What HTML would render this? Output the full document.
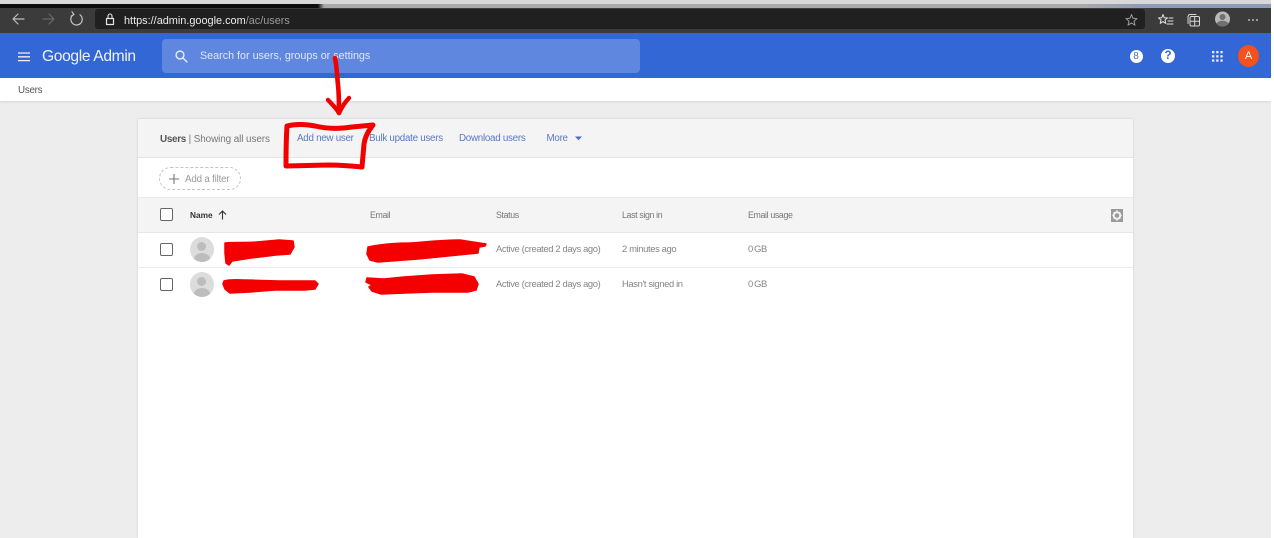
<!DOCTYPE html>
<html><head><meta charset="utf-8">
<style>
html,body{margin:0;padding:0;width:1274px;height:538px;overflow:hidden;background:#fff}
#p{position:absolute;left:0;top:0;width:1271px;height:538px;background:#ededed;overflow:hidden;font-family:"Liberation Sans",sans-serif;filter:blur(.35px)}
.a{position:absolute}
.t{position:absolute;white-space:nowrap;line-height:14px}
.cb{position:absolute;left:160px;width:10.500px;height:11px;border:1.500px solid #666;border-radius:2px;background:#fff}
.av{position:absolute;left:190px;width:24px;height:25px;border-radius:50%;background:#dcdcdc;overflow:hidden}
.av i{position:absolute;left:7px;top:5px;width:9px;height:9px;border-radius:50%;background:#bdbdbd}
.av b{position:absolute;left:4px;top:16px;width:16px;height:12px;border-radius:50%;background:#bdbdbd}
.h{font-size:8.800px;color:#777;letter-spacing:-.35px}
.c{font-size:9.400px;color:#858585;letter-spacing:-.36px}
.l{font-size:9.800px;color:#5a78c0;letter-spacing:-.27px}
</style></head><body>
<div id="p">
<div class="a" style="left:0;top:0;width:1271px;height:4px;background:#d8d8d8"></div>
<div class="a" style="left:0;top:4px;width:1271px;height:4px;background:linear-gradient(90deg,#0d0d0d 0,#0d0d0d 25%,#a9a9a9 25.5%,#a9a9a9 85%,#8d9ab8 90%,#8d9ab8 100%)"></div>
<div class="a" style="left:0;top:8px;width:1271px;height:25px;background:#3b3b3b"></div>
<div class="a" style="left:95px;top:9px;width:1050px;height:20px;background:#202020;border-radius:3px"></div>
<svg class="a" style="left:0;top:8px" width="120" height="25" fill="none" stroke-linecap="round" stroke-linejoin="round">
<path d="M24 11H13M18 6l-5 5 5 5" stroke="#bdbdbd" stroke-width="1.200"/>
<path d="M43 11h10M49 6l5 5-5 5" stroke="#686868" stroke-width="1.200"/>
<path d="M73.500 6.500A5.700 5.700 0 1 0 80 6.800M72 3.800l2 2.700-2.800 1.700" stroke="#c4c4c4" stroke-width="1.200"/>
<rect x="106.500" y="10.500" width="7" height="6" stroke="#e5e5e5" stroke-width="1.200"/>
<path d="M108 10.500V8a2 2 0 0 1 4 0v2.500" stroke="#e5e5e5" stroke-width="1.100"/>
</svg>
<div class="t" style="left:124px;top:13.500px;font-size:10.900px;color:#ececec">https://admin.google.com<span style="color:#9a9a9a">/ac/users</span></div>
<svg class="a" style="left:1120px;top:8px" width="151" height="25" fill="none" stroke-linejoin="round" stroke-linecap="round">
<path d="M11.500 6.500l1.500 3.800 4 .3-3 2.600 1 4-3.500-2.200-3.500 2.200 1-4-3-2.600 4-.3z" stroke="#9a9a9a"/>
<path d="M43 6.500l1.200 3.200 3.300.2-2.500 2.100.8 3.400-2.800-1.900-2.800 1.900.8-3.400-2.500-2.100 3.300-.2z" stroke="#e2e2e2"/>
<path d="M49 10h4M48 13h5M47 16h6" stroke="#e2e2e2"/>
<rect x="70" y="8.500" width="9.500" height="9.500" rx="1.500" stroke="#d8d8d8"/>
<path d="M68 15.500V8.500l1-2h7M74.700 9v9M70 13.200h9.500" stroke="#d8d8d8"/>
<circle cx="102.500" cy="11" r="7.500" fill="#b8b8b8"/>
<circle cx="102.500" cy="9" r="3" fill="#707070"/>
<path d="M96.500 15.500a6.500 4.500 0 0 1 12 0a7.500 7.500 0 0 1-12 0z" fill="#707070"/>
<circle cx="129" cy="12" r=".9" fill="#ddd"/><circle cx="133" cy="12" r=".9" fill="#ddd"/><circle cx="137" cy="12" r=".9" fill="#ddd"/>
</svg>

<div class="a" style="left:0;top:33px;width:1271px;height:45px;background:#3367d6"></div>
<div class="a" style="left:0;top:78px;width:1271px;height:23px;background:#fff;box-shadow:0 1px 2px rgba(0,0,0,.1)"></div>
<svg class="a" style="left:18px;top:52px" width="13" height="10"><path d="M0 1h12M0 4.800h12M0 8.600h12" stroke="#f0f0f0" stroke-width="1.300"/></svg>
<div class="t" style="left:42px;top:48px;font-size:15.600px;color:#eef2fb;line-height:18px;letter-spacing:-.35px">Google Admin</div>
<div class="a" style="left:162px;top:39px;width:478px;height:34px;background:#5f87e0;border-radius:4px"></div>
<svg class="a" style="left:175px;top:50px" width="13" height="13" fill="none" stroke="#e9eefa" stroke-width="1.400"><circle cx="5" cy="5" r="3.900"/><path d="M8 8l4.200 4.200"/></svg>
<div class="t" style="left:200px;top:49px;font-size:10.750px;color:#dfe7f8">Search for users, groups or settings</div>

<div class="a" style="left:1129.500px;top:49.500px;width:13px;height:13px;border-radius:50%;background:#fff;color:#3f6fd6;font-size:10px;line-height:13px;text-align:center">8</div>
<div class="a" style="left:1161px;top:49px;width:14px;height:14px;border-radius:50%;background:#fff;color:#3367d6;font-size:11.500px;font-weight:bold;line-height:14px;text-align:center">?</div>
<svg class="a" style="left:1212px;top:51px" width="11" height="11" fill="#e6ecfa">
<rect x="0" y="0" width="2.300" height="2.300"/><rect x="4.200" y="0" width="2.300" height="2.300"/><rect x="8.400" y="0" width="2.300" height="2.300"/>
<rect x="0" y="4.200" width="2.300" height="2.300"/><rect x="4.200" y="4.200" width="2.300" height="2.300"/><rect x="8.400" y="4.200" width="2.300" height="2.300"/>
<rect x="0" y="8.400" width="2.300" height="2.300"/><rect x="4.200" y="8.400" width="2.300" height="2.300"/><rect x="8.400" y="8.400" width="2.300" height="2.300"/></svg>
<div class="a" style="left:1238px;top:45px;width:21px;height:22px;border-radius:50%;background:#f4511e;color:#fff;font-size:11px;line-height:23px;text-align:center">A</div>

<div class="t" style="left:18px;top:84px;font-size:9.800px;color:#555;letter-spacing:-.25px">Users</div>

<div class="a" style="left:138px;top:119px;width:995px;height:419px;background:#fff;box-shadow:0 0 2px rgba(0,0,0,.16)"></div>
<div class="a" style="left:138px;top:119px;width:995px;height:39px;background:#f4f4f4;border-bottom:1px solid #e4e4e4;box-sizing:border-box"></div>
<div class="a" style="left:138px;top:197px;width:995px;height:36px;background:#f4f4f4;border-top:1px solid #ebebeb;border-bottom:1px solid #e6e6e6;box-sizing:border-box"></div>
<div class="a" style="left:138px;top:267px;width:995px;height:1px;background:#ececec"></div>

<div class="t" style="left:160px;top:133px;font-size:9.900px;color:#777;letter-spacing:-.08px"><b style="color:#555;font-weight:bold;letter-spacing:-.3px">Users</b> | Showing all users</div>
<div class="t l" style="left:297px;top:132px">Add new user</div>
<div class="t l" style="left:369px;top:132px">Bulk update users</div>
<div class="t l" style="left:459px;top:132px">Download users</div>
<div class="t l" style="left:546.500px;top:132px">More</div>
<svg class="a" style="left:575px;top:136px" width="8" height="5"><path d="M0 .5h7L3.500 4.200z" fill="#4a6cc4"/></svg>

<div class="a" style="left:159px;top:167px;width:82px;height:23px;border:1px dashed #c4c4c4;border-radius:12px;box-sizing:border-box"></div>
<svg class="a" style="left:169px;top:174px" width="10" height="10"><path d="M5 0v10M0 5h10" stroke="#777" stroke-width="1.100"/></svg>
<div class="t" style="left:185px;top:172.500px;font-size:9.800px;color:#9a9a9a;letter-spacing:-.2px">Add a filter</div>

<div class="cb" style="top:208px"></div>
<div class="t" style="left:190px;top:208px;font-size:8.300px;font-weight:bold;color:#333">Name</div>
<svg class="a" style="left:218px;top:210px" width="9" height="10" fill="none" stroke="#333" stroke-width="1.100"><path d="M4.500 9.500V1M1 4.500l3.500-3.500L8 4.500"/></svg>
<div class="t h" style="left:370px;top:208px">Email</div>
<div class="t h" style="left:496px;top:208px">Status</div>
<div class="t h" style="left:622px;top:208px">Last sign in</div>
<div class="t h" style="left:748px;top:208px">Email usage</div>
<svg class="a" style="left:1111px;top:209px" width="12" height="13"><rect width="12" height="13" fill="#9a9a9a"/><circle cx="6" cy="6.500" r="3.300" fill="none" stroke="#f2f2f2" stroke-width="2"/><path d="M6 1.200v2M6 9.800v2M1.300 6.500h2M8.700 6.500h2M2.800 3.200l1.300 1.300M8 8.500l1.300 1.300M9.200 3.200L7.900 4.500M4 8.500L2.800 9.800" stroke="#f2f2f2" stroke-width="1.300"/></svg>

<div class="cb" style="top:243px"></div>
<div class="av" style="top:237px"><i></i><b></b></div>
<div class="t c" style="left:496px;top:242px">Active (created 2 days ago)</div>
<div class="t c" style="left:622px;top:242px">2 minutes ago</div>
<div class="t c" style="left:748px;top:242px;word-spacing:-1px">0 GB</div>

<div class="cb" style="top:277.500px"></div>
<div class="av" style="top:272px"><i></i><b></b></div>
<div class="t c" style="left:496px;top:277px">Active (created 2 days ago)</div>
<div class="t c" style="left:622px;top:277px">Hasn't signed in</div>
<div class="t c" style="left:748px;top:277px;word-spacing:-1px">0 GB</div>

<svg class="a" style="left:0;top:0" width="1271" height="538" fill="none" stroke-linecap="round" stroke-linejoin="round">
<g stroke="#f20000">
<path d="M335 58c2 10 2 18 3 27s1 18 1 28" stroke-width="4.600"/>
<path d="M328 100c4 4 8 8 11 13 3-6 6-11 10-15" stroke-width="4.400"/>
<path d="M287 126c8-2 18-2 28 0 13 3 25 3 37 1l21-2c-5 6-8 12-9 19l-2 23c-10-1-22-2-34-2l-42 1c0-12 0-25 1-40z" stroke-width="5"/>
</g>
<g fill="#f40000" stroke="#f40000" stroke-width="1.500">
<path d="M225 243c10-1 22 0 32-1l22-2 14 1 1 6-4 7-14 1-25 3-19 3-3 4-3-2-1-10z"/>
<path d="M368 247c10-2 26-4 42-4 16-1 32-3 50-3l26 4-1 2-6 1-1 6-20 2-40 4-40 3-8-2-3-6z"/>
<path d="M224 281c8-2 14-1 22-1l34 1 35 0 3 3-3 5-10 1-30 0-25 2-20 1-5-4-2-5z"/>
<path d="M367 278l17 1 20-2 28-2 30-1 12 3 4 7-2 6-8 2-35 0-28 1-24 1-9-3-3-4 3-2-6-3z"/>
</g>
</svg>
</div>
</body></html>
